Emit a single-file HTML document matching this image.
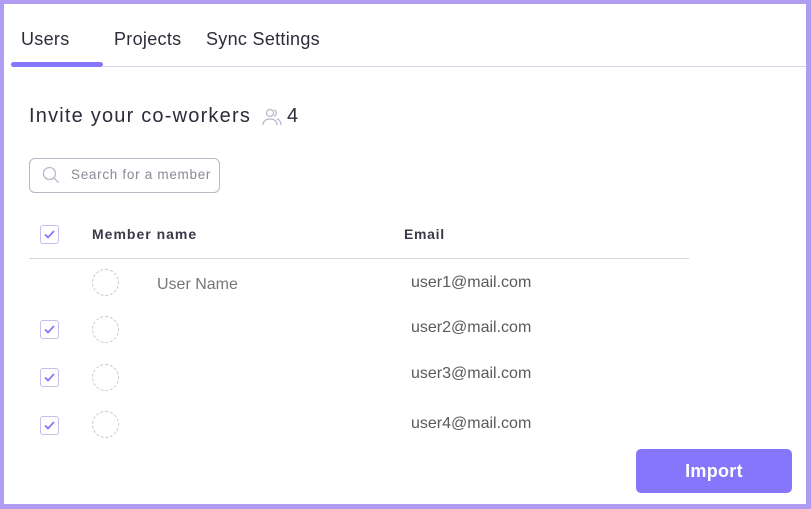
<!DOCTYPE html>
<html><head><style>
*{margin:0;padding:0;box-sizing:border-box}
body{width:811px;height:509px;overflow:hidden;background:#fff;font-family:"Liberation Sans",sans-serif;position:relative}
.frame{position:absolute;left:0;top:0;width:811px;height:509px;border-style:solid;border-color:#b09cf0;border-width:4px 5px 5px 4px}
.a{position:absolute;white-space:nowrap}
.tab{font-size:18px;color:#2c2c3a;top:29px;letter-spacing:0.3px}
.cb{position:absolute;left:40px;width:19px;height:19px;border:1px solid #c4bff0;border-radius:3px}
.cb svg{position:absolute;left:3px;top:4px}
.av{position:absolute;left:92px;width:27px;height:27px;border:1px dashed #c8c8c8;border-radius:50%}
.em{font-size:16px;color:#5a5a5a;left:411px}
</style></head><body>
<div class="frame"></div>
<div class="a tab" style="left:21px">Users</div>
<div class="a tab" style="left:114px">Projects</div>
<div class="a tab" style="left:206px">Sync Settings</div>
<div class="a" style="left:103px;top:66px;width:703px;height:1px;background:#d4d2e4"></div>
<div class="a" style="left:11px;top:62px;width:92px;height:5px;border-radius:3px;background:#8676fc"></div>
<div class="a" style="left:29px;top:105px;font-size:20px;color:#2c2c3a;letter-spacing:1.2px">Invite your co-workers</div>
<svg class="a" style="left:262px;top:108px" width="20" height="18" viewBox="0 0 20 18" fill="none" stroke="#b8b8d0" stroke-width="1.3"><circle cx="8" cy="5" r="3.5"/><path d="M1 17c0-4 3-6 7-6s7 2 7 6"/><path d="M12 1.8a3.5 3.5 0 0 1 0 6.5M15 11c2 .6 4 2.4 4 6"/></svg>
<div class="a" style="left:287px;top:105px;font-size:20px;color:#2c2c3a">4</div>
<div class="a" style="left:29px;top:158px;width:191px;height:35px;border:1px solid #b8b8c4;border-radius:6px"></div>
<svg class="a" style="left:42px;top:166px" width="18" height="18" viewBox="0 0 18 18" fill="none" stroke="#b8b8d0" stroke-width="1.3"><circle cx="7.5" cy="7.5" r="6"/><path d="M12 12l4.5 4.5"/></svg>
<div class="a" style="left:71px;top:167px;font-size:13.5px;color:#8a8a96;letter-spacing:0.7px">Search for a member</div>
<div class="cb" style="top:225px"><svg width="11" height="9" viewBox="0 0 11 9" fill="none" stroke="#8676fc" stroke-width="1.8"><path d="M1 4.5l3 3L10 1"/></svg></div>
<div class="a" style="left:92px;top:226px;font-size:14px;font-weight:bold;color:#3a3a48;letter-spacing:1px">Member name</div>
<div class="a" style="left:404px;top:226px;font-size:14px;font-weight:bold;color:#3a3a48;letter-spacing:0.7px">Email</div>
<div class="a" style="left:29px;top:258px;width:660px;height:1px;background:#d0d4dc"></div>
<div class="av" style="top:269px"></div>
<div class="a" style="left:157px;top:276px;font-size:16px;color:#777">User Name</div>
<div class="a em" style="top:274px">user1@mail.com</div>
<div class="cb" style="top:320px"><svg width="11" height="9" viewBox="0 0 11 9" fill="none" stroke="#8676fc" stroke-width="1.8"><path d="M1 4.5l3 3L10 1"/></svg></div>
<div class="av" style="top:316px"></div>
<div class="a em" style="top:319px">user2@mail.com</div>
<div class="cb" style="top:368px"><svg width="11" height="9" viewBox="0 0 11 9" fill="none" stroke="#8676fc" stroke-width="1.8"><path d="M1 4.5l3 3L10 1"/></svg></div>
<div class="av" style="top:364px"></div>
<div class="a em" style="top:365px">user3@mail.com</div>
<div class="cb" style="top:416px"><svg width="11" height="9" viewBox="0 0 11 9" fill="none" stroke="#8676fc" stroke-width="1.8"><path d="M1 4.5l3 3L10 1"/></svg></div>
<div class="av" style="top:411px"></div>
<div class="a em" style="top:415px">user4@mail.com</div>
<div class="a" style="left:636px;top:449px;width:156px;height:44px;border-radius:5px;background:#8676fc;color:#fff;font-size:18px;font-weight:bold;text-align:center;line-height:44px;letter-spacing:0.3px">Import</div>
</body></html>
